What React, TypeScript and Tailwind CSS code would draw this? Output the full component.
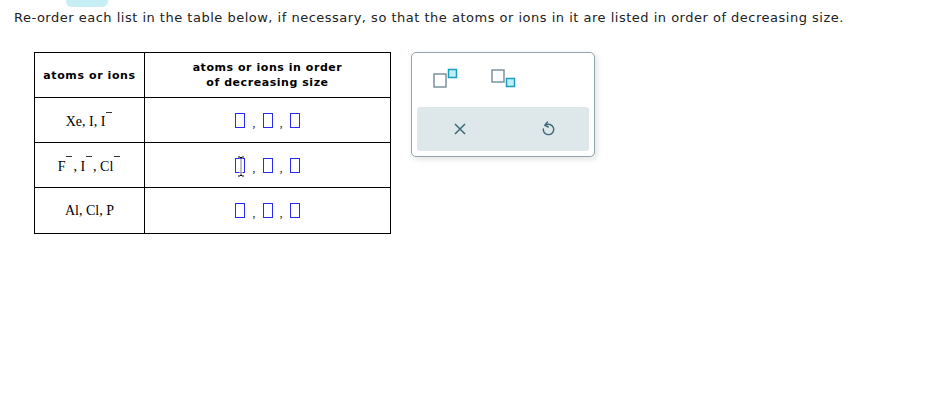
import React from "react";

const Box = ({ cursor = false }: { cursor?: boolean }) => (
  <span className="relative inline-block w-[10px] h-[15px] border border-[#2a2af0] align-middle">
    {cursor && (
      <svg className="absolute left-[1px] top-[-3px]" width="8" height="21" viewBox="0 0 8 21">
        <path d="M1 1 H3 L4 2 L5 1 H7 M4 2 V19 M1 20 H3 L4 19 L5 20 H7" stroke="#000" strokeWidth="1" fill="none" />
        <path d="M3 2.5 V18.5 M5 2.5 V18.5" stroke="#fff" strokeWidth="1" fill="none" />
      </svg>
    )}
  </span>
);

const Answers = ({ cursor = false }: { cursor?: boolean }) => (
  <div className="flex items-center justify-center gap-[7px] text-[#333] font-['Liberation_Serif',serif] text-[13px]">
    <Box cursor={cursor} />
    <span className="leading-none mt-[4px]">,</span>
    <Box />
    <span className="leading-none mt-[4px]">,</span>
    <Box />
  </div>
);

const Neg = ({ hi = false }: { hi?: boolean }) => (
  <span
    className={
      "inline-block w-[6px] h-[1px] bg-[#333] ml-[1px] mr-[1px] align-baseline relative " +
      (hi ? "top-[-14px]" : "top-[-13px]")
    }
  />
);

export default function App() {
  return (
    <div className="relative w-[941px] h-[408px] bg-white overflow-hidden font-['DejaVu_Sans',sans-serif] text-[#222]">
      <div className="absolute left-[66px] top-[-10px] w-[42px] h-[17px] rounded-[6px] bg-[#c6eef5]" />
      <p className="pl-[14px] pt-[9px] text-[13px] leading-[18px] tracking-[0.5px]">
        Re-order each list in the table below, if necessary, so that the atoms or ions in it are listed in order of decreasing size.
      </p>
      <div className="flex items-start mt-[25px] pl-[34px]">
        <table className="border-collapse border border-black text-black">
          <tbody>
            <tr className="h-[45px]">
              <th className="w-[110px] border border-black text-[11px] font-bold leading-[15px] tracking-[0.6px]">atoms or ions</th>
              <th className="w-[246px] border border-black text-[11px] font-bold leading-[15px] tracking-[0.55px]">
                atoms or ions in order
                <br />
                of decreasing size
              </th>
            </tr>
            <tr className="h-[45px]">
              <td className="border border-black text-center font-['Liberation_Serif',serif] text-[14px] pt-[2px]">
                Xe, I, I<Neg />
              </td>
              <td className="border border-black">
                <Answers />
              </td>
            </tr>
            <tr className="h-[45px]">
              <td className="border border-black text-center font-['Liberation_Serif',serif] text-[14px] pt-[3px]">
                F<Neg hi />, I<Neg hi />, Cl<Neg hi />
              </td>
              <td className="border border-black">
                <Answers cursor />
              </td>
            </tr>
            <tr className="h-[46px]">
              <td className="border border-black text-center font-['Liberation_Serif',serif] text-[14px]">
                Al, Cl, P
              </td>
              <td className="border border-black">
                <Answers />
              </td>
            </tr>
          </tbody>
        </table>
        <div className="ml-[20px] w-[184px] h-[105px] rounded-[5px] border border-[#8fa6ad] bg-white shadow-[2px_2px_6px_rgba(0,0,0,0.12)] flex flex-col">
          <div className="h-[54px] flex items-start pt-[15px]">
            <svg className="ml-[21px]" width="26" height="22" viewBox="0 0 26 22">
              <rect x="1" y="6" width="12" height="13" fill="#fff" stroke="#7d939b" strokeWidth="1.5" />
              <rect x="15.5" y="1.5" width="8" height="8" fill="#bfeef5" stroke="#1aa0bd" strokeWidth="1.5" />
            </svg>
            <svg className="ml-[32px]" width="26" height="22" viewBox="0 0 26 22">
              <rect x="1" y="2" width="12" height="12" fill="#fff" stroke="#7d939b" strokeWidth="1.5" />
              <rect x="15.5" y="10.5" width="8" height="8" fill="#bfeef5" stroke="#1aa0bd" strokeWidth="1.5" />
            </svg>
          </div>
          <div className="mx-[5px] h-[44px] rounded-[3px] bg-[#dee7ea] flex items-center">
            <svg className="ml-[37px]" width="12" height="12" viewBox="0 0 12 12">
              <path d="M1 1 L11 11 M11 1 L1 11" stroke="#3e6a78" strokeWidth="1.5" fill="none" />
            </svg>
            <svg className="ml-[75px]" width="14" height="16" viewBox="0 0 14 16">
              <path d="M4.5 4.2 A5.2 5.2 0 1 1 2.3 8" stroke="#3e6a78" strokeWidth="1.4" fill="none" strokeLinecap="round" />
              <path d="M6.5 1 L3.8 4.3 L7.3 6" stroke="#3e6a78" strokeWidth="1.4" fill="none" strokeLinecap="round" strokeLinejoin="round" />
            </svg>
          </div>
        </div>
      </div>
    </div>
  );
}
